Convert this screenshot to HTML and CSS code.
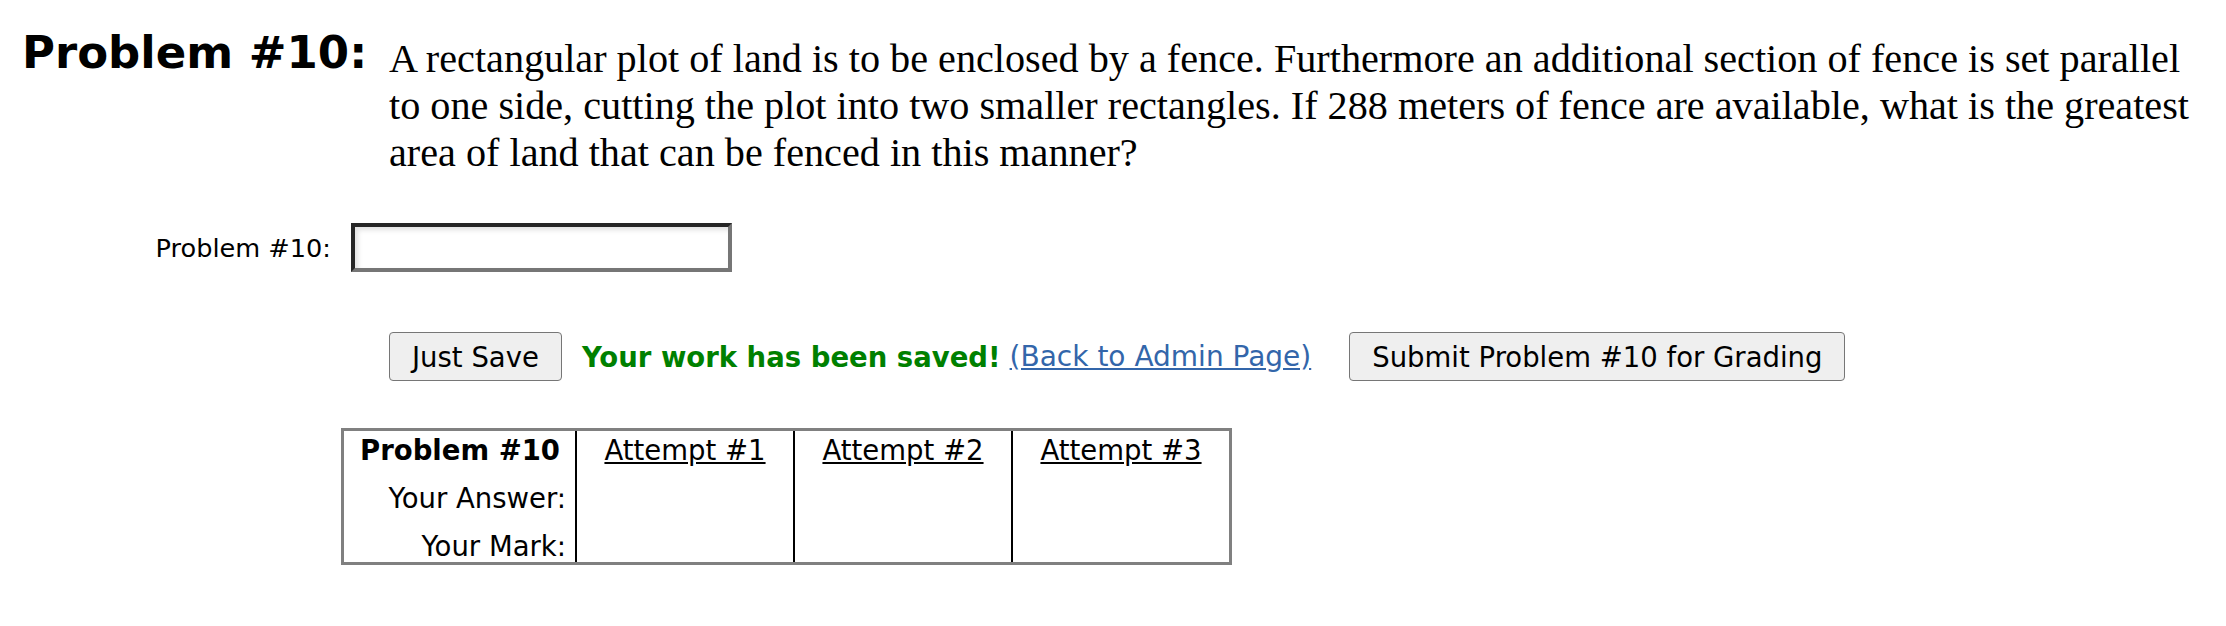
FILE: index.html
```html
<!DOCTYPE html>
<html>
<head>
<meta charset="utf-8">
<title>Problem #10</title>
<link rel="stylesheet" href="styles.css">
</head>
<body>
<div class="problem">
  <h1 class="ptitle">Problem #10:</h1>
  <p class="ptext">A rectangular plot of land is to be enclosed by a fence. Furthermore an additional section of fence is set parallel to one side, cutting the plot into two smaller rectangles. If 288 meters of fence are available, what is the greatest area of land that can be fenced in this manner?</p>
</div>
<div class="answer-row">
  <label class="answer-label" for="ans">Problem #10:</label>
  <input class="answer-input" id="ans" type="text">
</div>
<div class="actions">
  <button class="btn" type="button">Just Save</button>
  <span class="saved">Your work has been saved!</span>
  <a class="admin-link" href="#">(Back to Admin Page)</a>
  <button class="btn btn-submit" type="button">Submit Problem #10 for Grading</button>
</div>
<div class="attempts">
  <div class="col col-labels">
    <div class="cell cell-head">Problem #10</div>
    <div class="cell">Your Answer:</div>
    <div class="cell">Your Mark:</div>
  </div>
  <div class="col col-attempt">
    <div class="cell"><a class="attempt-link" href="#">Attempt #1</a></div>
    <div class="cell"></div>
    <div class="cell"></div>
  </div>
  <div class="col col-attempt">
    <div class="cell"><a class="attempt-link" href="#">Attempt #2</a></div>
    <div class="cell"></div>
    <div class="cell"></div>
  </div>
  <div class="col col-attempt">
    <div class="cell"><a class="attempt-link" href="#">Attempt #3</a></div>
    <div class="cell"></div>
    <div class="cell"></div>
  </div>
</div>
</body>
</html>
```
FILE: styles.css
```css
html, body {
  margin: 0;
  padding: 0;
  background: #ffffff;
}
body {
  font-family: "DejaVu Sans", Verdana, sans-serif;
  color: #000000;
}
.problem {
  display: flex;
  align-items: flex-start;
  padding: 27px 0 0 22px;
}
.ptitle {
  flex: 0 0 367px;
  margin: 0;
  font-family: "DejaVu Sans", Verdana, sans-serif;
  font-weight: bold;
  font-size: 45px;
  line-height: 52px;
}
.ptext {
  width: 1820px;
  margin: 8px 0 0 0;
  font-family: "Liberation Serif", "Times New Roman", serif;
  font-size: 40.2px;
  line-height: 47px;
}
.answer-row {
  display: flex;
  align-items: center;
  margin-top: 47px;
}
.answer-label {
  width: 331px;
  margin-right: 20px;
  text-align: right;
  font-size: 25.6px;
}
.answer-input {
  box-sizing: border-box;
  width: 381px;
  height: 49px;
  margin: 0;
  padding: 0 6px;
  border-style: solid;
  border-width: 4px;
  border-color: #262626 #767676 #767676 #262626;
  background: #ffffff;
  box-shadow: inset 3px 3px 5px rgba(0, 0, 0, 0.12);
  font-family: "DejaVu Sans", sans-serif;
  font-size: 25px;
  outline: none;
}
.actions {
  display: flex;
  align-items: center;
  margin-top: 60px;
  padding-left: 389px;
  font-size: 27.5px;
}
.btn {
  box-sizing: border-box;
  height: 49px;
  margin: 0;
  padding: 0 22px;
  border: 1px solid #767676;
  border-radius: 4px;
  background: #efefef;
  color: #000000;
  font-family: "DejaVu Sans", Verdana, sans-serif;
  font-size: 27.5px;
  line-height: 32px;
}
.saved {
  margin-left: 20px;
  color: #008000;
  font-weight: bold;
  line-height: 32px;
}
.admin-link {
  margin-left: 9px;
  color: #3366aa;
  font-size: 28px;
  text-decoration: underline;
  line-height: 32px;
}
.btn-submit {
  margin-left: 38px;
}
.attempts {
  display: grid;
  grid-template-columns: 231px repeat(3, 218px);
  width: max-content;
  margin: 47px 0 0 341px;
  border: 3px solid #808080;
  font-size: 27.5px;
}
.col {
  box-sizing: border-box;
  display: flex;
  flex-direction: column;
  gap: 16px;
  padding-top: 2.5px;
}
.col-attempt {
  border-left: 2px solid #000000;
  text-align: center;
}
.col-labels {
  text-align: right;
  padding-right: 9px;
}
.cell {
  height: 32px;
  line-height: 32px;
  white-space: nowrap;
}
.cell-head {
  font-weight: bold;
  padding-right: 6px;
}
.attempt-link {
  color: #000000;
  text-decoration: underline;
}
```
